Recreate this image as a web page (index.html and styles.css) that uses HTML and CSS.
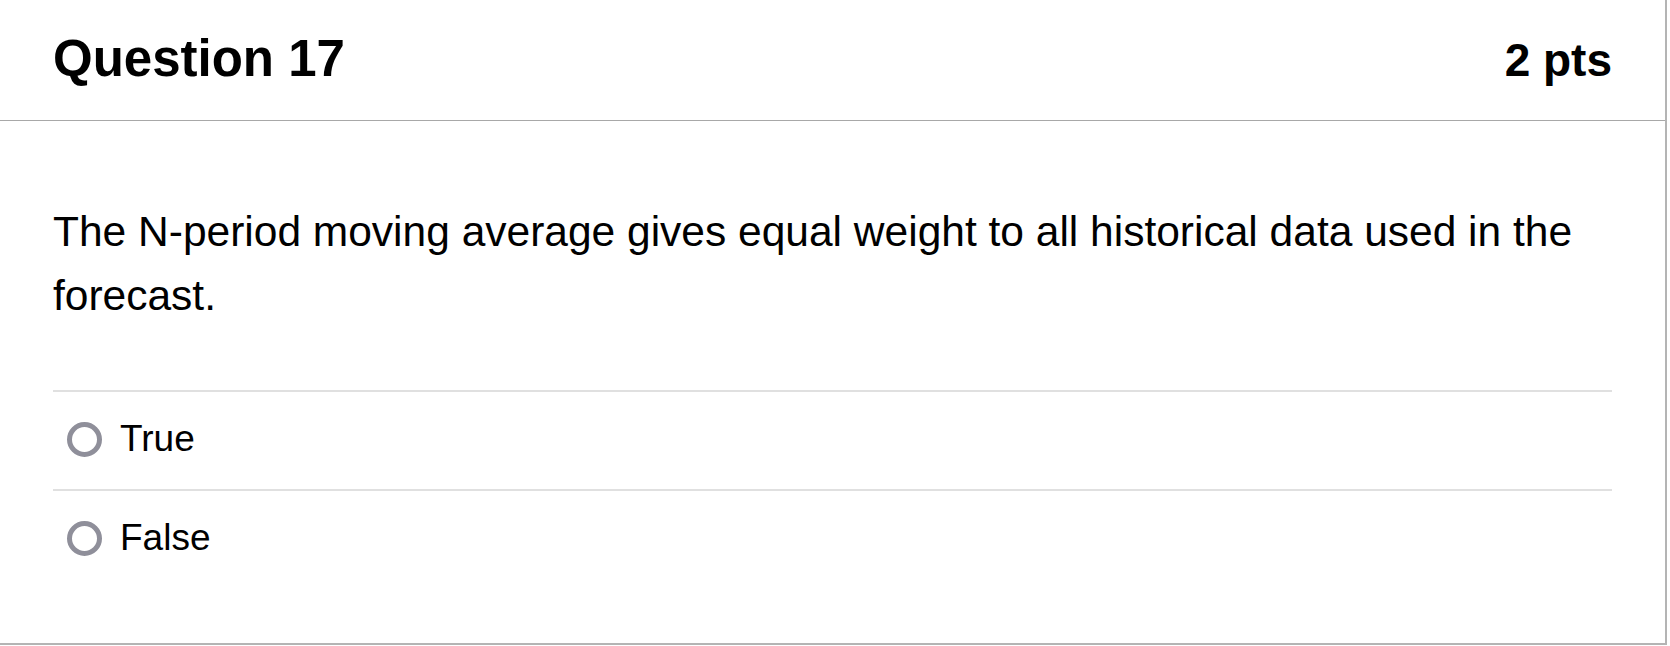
FILE: index.html
```html
<!DOCTYPE html>
<html lang="en">
<head>
    <meta charset="UTF-8">
    <meta name="viewport" content="width=device-width, initial-scale=1.0">
    <title>Question 17</title>
    <link rel="stylesheet" href="styles.css">
</head>
<body>
    <div class="question">
        <div class="question-header">
            <span class="question-name">Question 17</span>
            <span class="question-points">2 pts</span>
        </div>
        <div class="question-body">
            <div class="question-text">
                The N-period moving average gives equal weight to all historical data used in the forecast.
            </div>
            <div class="answers">
                <label class="answer">
                    <input type="radio" name="q17" value="true">
                    <span>True</span>
                </label>
                <label class="answer">
                    <input type="radio" name="q17" value="false">
                    <span>False</span>
                </label>
            </div>
        </div>
    </div>
</body>
</html>
```

FILE: styles.css
```css
body {
    font-family: "Liberation Sans", Arial, Helvetica, sans-serif;
    margin: 0;
    color: #000;
    background: #fff;
}
.question {
    width: 1665px;
    border-right: 2px solid #b4b4b4;
    border-bottom: 2px solid #b4b4b4;
}
.question-header {
    display: flex;
    justify-content: space-between;
    align-items: baseline;
    padding: 29px 53px 30px 53px;
    border-bottom: 1px solid #a8a8a8;
    font-weight: bold;
}
.question-name {
    font-size: 51px;
    line-height: 60px;
}
.question-points {
    font-size: 46px;
    line-height: 60px;
}
.question-body {
    padding: 79px 53px 55px 53px;
}
.question-text {
    font-size: 42.5px;
    line-height: 64px;
    margin-bottom: 62px;
}
.answers {
    border-top: 2px solid #e0e0e0;
}
.answer {
    display: flex;
    align-items: center;
    box-sizing: border-box;
    height: 97px;
    padding: 0 0 3px 14px;
    font-size: 37px;
}
.answer + .answer {
    height: 99px;
    border-top: 2px solid #e0e0e0;
}
.answer input {
    -webkit-appearance: none;
    appearance: none;
    width: 35px;
    height: 35px;
    margin: 0 18px 0 0;
    border: 5px solid #8f8f9a;
    border-radius: 50%;
    box-sizing: border-box;
}
```
